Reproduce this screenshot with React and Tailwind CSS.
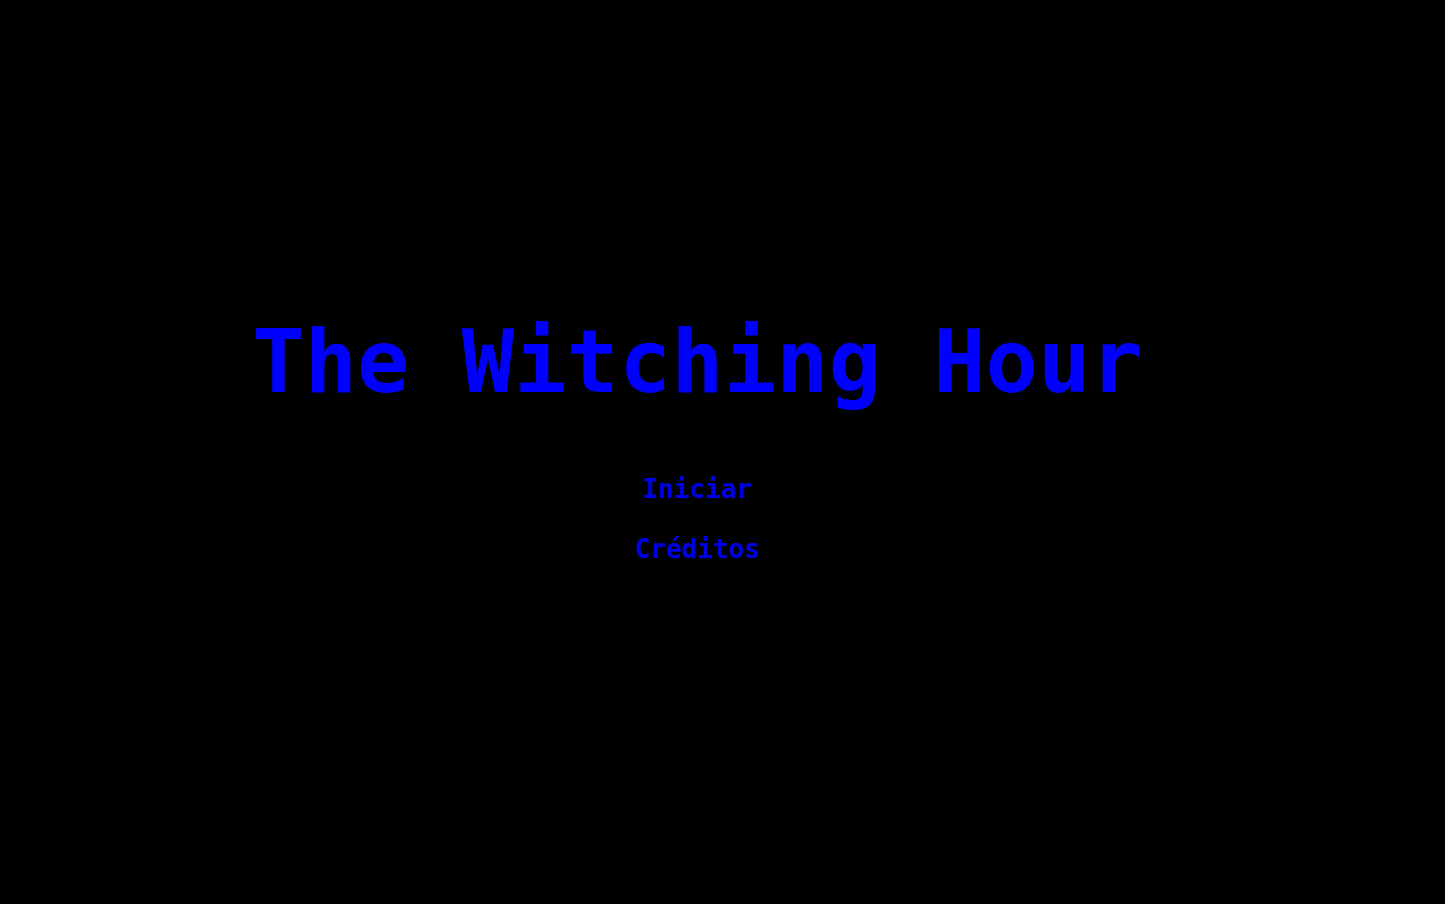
export default function App() {
    return (
        <div className="w-full h-screen bg-black flex flex-col items-center justify-center pb-[23px] pr-[50px] font-['DejaVu_Sans_Mono',monospace]">
            {/* Title */}
            <h1 className="text-[87px] leading-none font-bold text-[#0000ff] whitespace-nowrap">
                The Witching Hour
            </h1>

            {/* Menu */}
            <nav className="mt-[70px] flex flex-col items-center gap-[34px]">
                <button className="text-[26px] leading-none font-bold text-[#0000e6]">Iniciar</button>
                <button className="text-[26px] leading-none font-bold text-[#0000e6]">Créditos</button>
            </nav>
        </div>
    );
}
